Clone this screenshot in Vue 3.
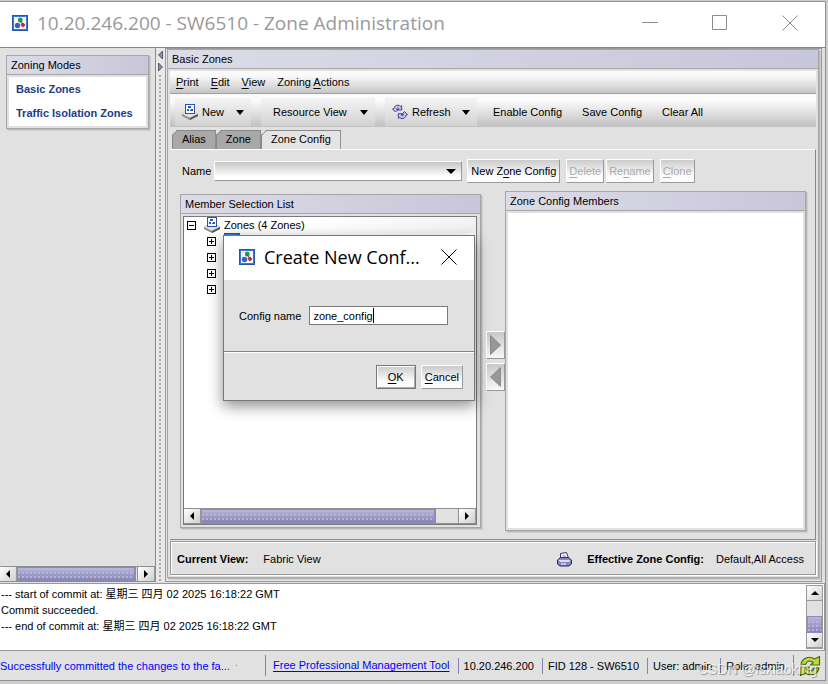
<script setup>
import { ref } from 'vue'

const menus = [
  { pre: '', key: 'P', post: 'rint' },
  { pre: '', key: 'E', post: 'dit' },
  { pre: '', key: 'V', post: 'iew' },
  { pre: 'Zoning ', key: 'A', post: 'ctions' }
]
const tabs = ['Alias', 'Zone', 'Zone Config']
const activeTab = ref('Zone Config')
const configName = ref('zone_config')
const selected = ref('')
const log = [
  '--- start of commit at: 星期三 四月 02 2025 16:18:22 GMT',
  'Commit succeeded.',
  '--- end of commit at: 星期三 四月 02 2025 16:18:22 GMT'
]
</script>

<template>
  <div class="desktop">
    <svg class="defs" width="0" height="0" aria-hidden="true">
      <symbol id="icon-app" viewBox="0 0 16 16">
        <rect width="16" height="16" fill="#2455b0" />
        <rect x="1" y="1" width="14" height="14" fill="#3f78d0" />
        <rect x="2" y="2" width="12" height="12" fill="#f2f6fd" />
        <path d="M6 3.5l2-1 2.500 1v3l-2.500 1-2-1z" fill="#1f9a50" />
        <circle cx="5.500" cy="10.500" r="2.700" fill="#3a62c0" />
        <path d="M11 7.500l2.500 2.500-2.500 2.500L8.500 10z" fill="#c62a24" />
        <path d="M8.500 6.500l2 2.500" stroke="#234" stroke-width="1" />
      </symbol>
      <symbol id="icon-zone" viewBox="0 0 16 16">
        <path d="M0 10l4-3h8l4 3v2l-8 4-8-4z" fill="#8a8a8a" />
        <path d="M0 10l4-3h8l4 3-8 4z" fill="#e0e0e0" />
        <path d="M8 14l8-4v2l-8 4z" fill="#555" />
        <rect x="3" y="0" width="10" height="10" fill="#2455b0" />
        <rect x="4" y="1" width="8" height="8" fill="#f4f8ff" />
        <path d="M6 2h3v2H6zM5 5h2v2H5zM8 6h1v1H8z" fill="#2a5fc4" />
        <path d="M9 5h2v2H9z" fill="#7a3a6a" />
      </symbol>
      <symbol id="icon-refresh" viewBox="0 0 16 16">
        <g fill="#c3c6f4" stroke="#34347c" stroke-width=".9" stroke-linejoin="round">
          <path d="M3.500 8L.5 5l1.500-.2C2 2.500 4 1 6 1.200c1.200 0 2 .6 2.500 1.200L9.500 1.500 9.800 6H5.500l1.200-1.500C5.800 3.500 4.500 4 4.600 5.200L6 5.500z" />
          <path d="M12.500 7.500l3 3.200-1.500.2c0 2.300-2 3.900-4 3.700-1.200 0-2-.6-2.500-1.200L6.500 14.500 6.200 9.700h4.300L9.300 11.200c.9 1 2.200.5 2.100-.7L10 10.200z" />
        </g>
      </symbol>
      <symbol id="icon-down" viewBox="0 0 8 5"><path d="M0 0h8L4 5z" fill="#000" /></symbol>
    </svg>

    <div class="window">
      <header class="titlebar">
        <svg class="app-icon"><use href="#icon-app" /></svg>
        <h1>10.20.246.200 - SW6510 - Zone Administration</h1>
        <div class="window-buttons">
          <button aria-label="Minimize"><svg viewBox="0 0 16 16"><path d="M0 7.500h16" /></svg></button>
          <button aria-label="Maximize"><svg viewBox="0 0 16 16"><path d="M.5.5h14v14H.5z" /></svg></button>
          <button aria-label="Close"><svg viewBox="0 0 16 16"><path d="M.5.5l15 15M15.500.5l-15 15" /></svg></button>
        </div>
      </header>

      <div class="body">
        <aside class="side">
          <section class="box modes">
            <h2>Zoning Modes</h2>
            <nav>
              <a href="#basic">Basic Zones</a>
              <a href="#isolation">Traffic Isolation Zones</a>
            </nav>
          </section>
          <div class="hscroll">
            <button aria-label="Scroll left"><svg viewBox="0 0 4 8"><path d="M4 0v8L0 4z" /></svg></button>
            <div class="thumb"></div>
            <div class="track short"></div>
            <button aria-label="Scroll right"><svg viewBox="0 0 4 8"><path d="M0 0v8l4-4z" /></svg></button>
          </div>
        </aside>

        <div class="divider">
          <svg viewBox="0 0 5 20"><path d="M4.500 0v8L.5 4z" fill="#8a86ba" stroke="#222" stroke-width=".6" /><path d="M.5 12v8l4-4z" fill="#8a86ba" stroke="#222" stroke-width=".6" /></svg>
        </div>

        <div class="frame">
          <section class="main box">
            <h2>Basic Zones</h2>
            <div class="content">
              <nav class="menubar">
                <button v-for="m in menus" :key="m.key">{{ m.pre }}<u>{{ m.key }}</u>{{ m.post }}</button>
              </nav>
              <div class="toolbar">
                <button class="drop new"><svg class="ico"><use href="#icon-zone" /></svg>New<svg class="arrow"><use href="#icon-down" /></svg></button>
                <button class="drop view">Resource View<svg class="arrow"><use href="#icon-down" /></svg></button>
                <button class="drop reload"><svg class="ico"><use href="#icon-refresh" /></svg>Refresh<svg class="arrow"><use href="#icon-down" /></svg></button>
                <div class="plain">
                  <button>Enable Config</button>
                  <button>Save Config</button>
                  <button>Clear All</button>
                </div>
              </div>

              <div class="tabs" role="tablist">
                <button v-for="t in tabs" :key="t" role="tab" class="tab" :class="{ active: t === activeTab }" :aria-selected="t === activeTab" @click="activeTab = t">{{ t }}<svg viewBox="0 0 6 6"><path d="M0 6L6 0" /></svg></button>
              </div>

              <div class="tabpanel">
                <div class="namerow">
                  <label for="cfg">Name</label>
                  <div class="combo">
                    <select id="cfg" v-model="selected"><option value=""></option></select>
                    <svg viewBox="0 0 10 5"><path d="M0 0h10L5 5z" /></svg>
                  </div>
                  <button class="btn wide">New Z<u>o</u>ne Config</button>
                  <button class="btn" disabled><u>D</u>elete</button>
                  <button class="btn rename" disabled>Re<u>n</u>ame</button>
                  <button class="btn" disabled><u>C</u>lone</button>
                </div>

                <div class="lists">
                  <section class="box members">
                    <h2>Member Selection List</h2>
                    <div class="treebox">
                      <ul class="tree">
                        <li class="root"><span class="toggle"></span><svg class="ico"><use href="#icon-zone" /></svg>Zones (4 Zones)</li>
                        <li v-for="n in 4" :key="n" class="leaf"><span class="toggle plus"></span><svg class="ico"><use href="#icon-app" /></svg></li>
                      </ul>
                      <div class="hscroll">
                        <button aria-label="Scroll left"><svg viewBox="0 0 4 8"><path d="M4 0v8L0 4z" /></svg></button>
                        <div class="thumb"></div>
                        <div class="track"></div>
                        <button aria-label="Scroll right"><svg viewBox="0 0 4 8"><path d="M0 0v8l4-4z" /></svg></button>
                      </div>
                    </div>
                  </section>
                  <div class="movers">
                    <button aria-label="Add"><svg viewBox="0 0 11 20"><path d="M.5.5v19l10-9.500z" /></svg></button>
                    <button aria-label="Remove"><svg viewBox="0 0 11 20"><path d="M10.500.5v19L.5 10z" /></svg></button>
                  </div>
                  <section class="box chosen">
                    <h2>Zone Config Members</h2>
                    <div class="empty"></div>
                  </section>
                </div>
              </div>

              <div class="summary">
                <b>Current View:</b><span>Fabric View</span>
                <svg class="printer" viewBox="0 0 15 15">
                  <path d="M3.500 6V1.500l6-1 2 5.500" fill="#fff" stroke="#33336f" />
                  <path d="M5.500 3.500l3-.5M6 5l3-.3" stroke="#888" stroke-width=".8" />
                  <path d="M.5 8l3-2.500h8L14.500 8v4l-2.500 2H3L.5 12z" fill="#8585c4" stroke="#29295f" />
                  <path d="M1.500 8h12l-1.500 2H3z" fill="#dcdcf4" />
                  <path d="M4 12h5" stroke="#fff" />
                </svg>
                <b class="eff">Effective Zone Config:</b><span>Default,All Access</span>
              </div>
            </div>
          </section>
        </div>
      </div>

      <div class="log">
        <div class="lines"><p v-for="(l, i) in log" :key="i">{{ l }}</p></div>
        <div class="vscroll">
          <button aria-label="Scroll up"><svg viewBox="0 0 8 4"><path d="M0 4h8L4 0z" /></svg></button>
          <div class="track"></div>
          <div class="thumb"></div>
          <button aria-label="Scroll down"><svg viewBox="0 0 8 4"><path d="M0 0h8L4 4z" /></svg></button>
        </div>
      </div>

      <footer class="status">
        <span class="message">Successfully committed the changes to the fa...</span>
        <span class="grip"></span>
        <span class="cell tall"><a href="#tool">Free Professional Management Tool</a></span>
        <span class="cell">10.20.246.200</span>
        <span class="cell">FID 128 - SW6510</span>
        <span class="cell">User: admin</span>
        <span class="cell">Role: admin</span>
        <span class="cell tall sync">
          <svg viewBox="0 0 22 22">
            <g fill="#b9da3c" stroke="#4c6a12" stroke-width="1.200" stroke-linejoin="round">
              <path d="M2 9C3.500 2.500 11 .5 15.500 4L20.500 1.500v8.500h-9l2.800-2.500C11 5 7.500 6 6.500 9.500z" />
              <path d="M20 13c-1.500 6.500-9 8.500-13.500 5L1.500 20.500V12h9l-2.800 2.500c3.300 2.500 6.800 1.500 7.800-2z" />
            </g>
          </svg>
        </span>
        <span class="watermark">CSDN @isxiaoking</span>
      </footer>
    </div>

    <form class="dialog" role="dialog" aria-label="Create New Config" @submit.prevent>
      <header>
        <svg class="app-icon"><use href="#icon-app" /></svg>
        <h2>Create New Conf...</h2>
        <button type="button" aria-label="Close dialog"><svg viewBox="0 0 16 16"><path d="M.5.5l15 15M15.500.5l-15 15" /></svg></button>
      </header>
      <div class="field">
        <label for="name">Config name</label>
        <div class="entry">
          <input id="name" v-model="configName" type="text" />
          <i class="caret"></i>
        </div>
      </div>
      <div class="actions">
        <button class="btn primary"><u>O</u>K</button>
        <button class="btn" type="button"><u>C</u>ancel</button>
      </div>
    </form>
  </div>
</template>

<style>
body { margin: 0; }
</style>

<style scoped>
* { box-sizing: border-box; }
.desktop {
  position: relative; min-height: 100vh; padding: 1px 2px 3px 0; display: flex; flex-direction: column;
  background: #cdcdcd; color: #000; overflow: hidden;
  font: 11px/16px "Liberation Sans", "Noto Sans CJK SC", sans-serif;
}
.defs { position: absolute; }
h1, h2, p, ul { margin: 0; padding: 0; font-weight: normal; }
button, input, select { font: inherit; color: inherit; margin: 0; }
button { border: 0; background: none; padding: 0; white-space: nowrap; }
svg { display: block; flex: none; }
u { text-underline-offset: 2px; }

.window { flex: 1; display: flex; flex-direction: column; background: #e1e1e1; border: 1px solid #909090; border-left: 0; }
.titlebar { height: 45px; flex: none; background: #fff; display: flex; align-items: center; padding: 0 27px 3px 12px; }
.app-icon { width: 16px; height: 16px; }
.titlebar h1 { margin-left: 9px; flex: 1; font: 19px/24px "Open Sans", "Noto Sans", sans-serif; color: #999; white-space: nowrap; }
.window-buttons { display: flex; gap: 54px; }
.window-buttons svg { width: 16px; height: 16px; fill: none; stroke: #8c8c8c; }

.body { flex: 1; display: grid; grid-template-columns: 156px 9px 1fr; border-top: 1px solid #858585; min-height: 0; }
.side { border-right: 1px solid #8c8c8c; padding-top: 7px; display: flex; flex-direction: column; justify-content: space-between; }
.box { border: 1px solid #a6a6a6; box-shadow: 1px 1px 0 #b8b8b8, 2px 2px 0 #cfcfcf; background: #e1e1e1; display: flex; flex-direction: column; }
.box > h2 { flex: none; height: 19px; padding-left: 4px; font-size: 11px; line-height: 19px; border-bottom: 1px solid #a6a6a6; background: linear-gradient(90deg, #dcdce8, #c8c6d9); }
.modes { margin: 0 6px; }
.modes nav { background: #fff; margin: 2px; padding: 0 7px 1px; display: flex; flex-direction: column; }
.modes a { color: #1b3d86; font-weight: bold; text-decoration: none; line-height: 24px; white-space: nowrap; }

.hscroll { flex: none; height: 16px; display: flex; border: 1px solid #8f8f8f; border-width: 1px 0; background: #e1e1e1; }
.hscroll button { width: 17px; display: grid; place-items: center; background: linear-gradient(135deg, #fff, #cfcfcf); border-right: 1px solid #999; }
.hscroll button svg { width: 4px; height: 8px; }
.thumb {
  flex: 1;
  background: radial-gradient(circle at 1px 1px, #b6b4da 1px, transparent 1px) 0 0 / 4px 4px, linear-gradient(#b8b6da, #8785b5);
  border: 1px solid #8c8aba;
}
.track { width: 24px; border-right: 1px solid #8f8f8f; border-left: 1px solid #8f8f8f; }
.track.short { width: 3px; }

.divider { padding: 3px 2px 0; display: flex; flex-direction: column; align-items: center; gap: 4px; background: #e8e8e8; }
.divider svg { width: 5px; height: 20px; }
.divider::after { content: ""; flex: 1; width: 3px; background: radial-gradient(circle at 1px 1px, #aaa 1px, transparent 1px) 0 0 / 3px 4px; }

.frame { border: 1px solid #999; margin: 0 3px 0 0; padding: 0 2px 3px 1px; background: #e6e6e6; display: flex; min-width: 0; }
.main { flex: 1; min-width: 0; }
.content { flex: 1; display: flex; flex-direction: column; padding: 2px; min-width: 0; }
.menubar { height: 23px; display: flex; align-items: center; gap: 12px; padding-left: 6px; border-bottom: 1px solid #a2a2a2; background: linear-gradient(#fbfbfb 20%, #c6c6c6); }
.toolbar { height: 33px; display: flex; align-items: center; padding: 4px 0 1px 5px; gap: 10px; background: linear-gradient(#fbfbfb 20%, #c0c0c0); }
.drop { height: 28px; display: flex; align-items: center; background: linear-gradient(#f4f4f4, #d2d2d2); }
.drop .arrow { width: 8px; height: 5px; margin-left: auto; }
.ico { width: 16px; height: 16px; }
.drop .ico { margin-right: 4px; }
.new { width: 76px; padding: 0 7px; }
.view { width: 114px; padding: 0 7px 0 12px; }
.reload { width: 92px; padding: 0 7px; }
.plain { display: flex; gap: 20px; padding-left: 6px; }

.tabs { display: flex; padding: 3px 0 0 2px; }
.tab {
  position: relative; height: 19px; line-height: 16px; padding: 0 9px 2px; border: 1px solid #888; border-bottom: 0;
  background: #a8a8a8; clip-path: polygon(5px 0, 100% 0, 100% 100%, 0 100%, 0 5px);
}
.tab svg { position: absolute; left: -1px; top: -1px; width: 6px; height: 6px; stroke: #888; }
.tab.active { background: #e4e4e4; }
.tabpanel { flex: 1; display: flex; flex-direction: column; border-top: 1px solid #fff; border-right: 1px solid #888; border-bottom: 1px solid #8c8c8c; padding: 9px 10px 8px; }

.namerow { display: flex; align-items: center; height: 24px; padding-left: 2px; }
.combo { flex: 0 1 248px; height: 20px; margin: 0 5px 0 3px; position: relative; }
.combo select { width: 100%; height: 20px; appearance: none; border: 1px solid #fff; border-right-color: #999; border-bottom-color: #999; border-radius: 0; background: linear-gradient(#c6c6c6, #fff 80%); }
.combo svg { position: absolute; right: 6px; top: 8px; width: 10px; height: 5px; }
.btn { height: 24px; padding: 0 3px; border: 1px solid #fff; border-right-color: #999; border-bottom-color: #999; background: linear-gradient(#cbcbcb, #fcfcfc 70%); }
.btn:disabled { padding: 0 2px; color: #aaa; }
.wide { margin-right: 6px; }
.rename { margin: 0 6px 0 2px; }

.lists { flex: 1; display: grid; grid-template-columns: 301px 24px 301px; margin-top: 8px; }
.members { margin: 3px 0; }
.treebox { flex: 1; margin: 2px; margin-right: 3px; border: 1px solid #7a7a7a; background: #fff; display: flex; flex-direction: column; justify-content: space-between; }
.tree { list-style: none; }
.tree li { height: 16px; display: flex; align-items: center; }
.root { background: linear-gradient(90deg, #fff 45%, #f2f2f2); }
.root .ico { margin: 0 4px 0 8px; }
.toggle { width: 9px; height: 9px; margin-left: 3px; border: 1px solid #000; background: linear-gradient(#000, #000) center / 5px 1px no-repeat; }
.plus { margin-left: 23px; background: linear-gradient(#000, #000) center / 5px 1px no-repeat, linear-gradient(#000, #000) center / 1px 5px no-repeat; }
.leaf .ico { margin-left: 8px; }
.movers { display: flex; flex-direction: column; align-items: flex-end; gap: 4px; padding-top: 140px; }
.movers button { width: 19px; height: 28px; display: grid; place-items: center; border: 1px solid #fff; border-right-color: #999; border-bottom-color: #999; background: linear-gradient(#c8c8c8, #f8f8f8); }
.movers svg { width: 11px; height: 20px; fill: #989898; stroke: #777; stroke-width: .7; }
.empty { flex: 1; background: #fff; margin: 2px; }

.summary { flex: none; height: 34px; margin-top: 1px; display: flex; align-items: center; padding: 2px 11px 0 6px; border: 1px solid #999; box-shadow: inset 1px 1px 0 #fff, 1px 1px 0 #fff; }
.summary span { margin-left: 15px; }
.printer { width: 15px; height: 15px; margin: 0 15px 0 auto; }
.summary .eff + span { margin-left: 12px; }

.log { flex: none; height: 68px; margin-top: 1px; display: flex; background: #fff; border: 1px solid #999; border-left: 0; }
.lines { flex: 1; padding: 2px 1px; }
.vscroll { width: 17px; margin: 1px; display: flex; flex-direction: column; border: 1px solid #999; background: #e1e1e1; }
.vscroll button { height: 15px; display: grid; place-items: center; background: linear-gradient(135deg, #fff, #cfcfcf); border-bottom: 1px solid #999; }
.vscroll button svg { width: 8px; height: 4px; }
.vscroll .track { width: auto; flex: 1; border: 0; }
.vscroll .thumb { flex: none; height: 17px; }

.status { flex: none; height: 29px; position: relative; display: flex; align-items: center; padding-right: 4px; white-space: nowrap; }
.message { color: #00f; }
.grip { flex: 1; height: 1px; margin: 0 14px 0 6px; background: linear-gradient(90deg, #8583b0 1px, transparent 1px) 0 0 / 16px 1px; }
.cell { height: 16px; padding: 0 8px 0 5px; border-left: 1px solid #8583b0; }
.tall { height: 21px; line-height: 21px; padding-left: 7px; }
.cell a { color: #00f; text-underline-offset: 2px; }
.sync { padding: 0 0 0 5px; }
.sync svg { width: 22px; height: 22px; }
.watermark { position: absolute; right: 8px; bottom: 1px; font: 14px/20px "Liberation Sans", sans-serif; color: rgba(255, 255, 255, .75); text-shadow: 1px 1px 1px rgba(0, 0, 0, .35); }

.dialog { position: absolute; left: 223px; top: 235px; width: 252px; height: 166px; display: flex; flex-direction: column; border: 1px solid #777; background: #e1e1e1; box-shadow: 0 5px 14px rgba(0, 0, 0, .45); }
.dialog header { height: 44px; flex: none; display: flex; align-items: center; background: #fff; padding: 0 17px 2px 15px; }
.dialog h2 { flex: 1; margin-left: 9px; font: 18px/24px "Open Sans", "Noto Sans", sans-serif; white-space: nowrap; }
.dialog header button svg { width: 16px; height: 16px; stroke: #000; fill: none; }
.field { flex: 1; display: flex; align-items: center; padding: 0 26px 0 15px; gap: 8px; border-bottom: 1px solid #7f7da8; box-shadow: 0 1px 0 #fff; }
.field label { flex: none; }
.entry { flex: 1; position: relative; min-width: 0; }
.entry input { display: block; width: 100%; height: 19px; padding: 0 3px; border: 1px solid #7a7a7a; border-radius: 0; background: #fff; outline: 0; }
.caret { position: absolute; left: 64px; top: 2px; width: 1px; height: 15px; background: #000; }
.actions { flex: none; height: 48px; display: flex; align-items: center; justify-content: flex-end; gap: 5px; padding: 2px 11px 0 0; }
.primary { width: 40px; border: 1px solid #777; box-shadow: inset 1px 1px 0 #fff, inset -1px -1px 0 #aaa; }
</style>
